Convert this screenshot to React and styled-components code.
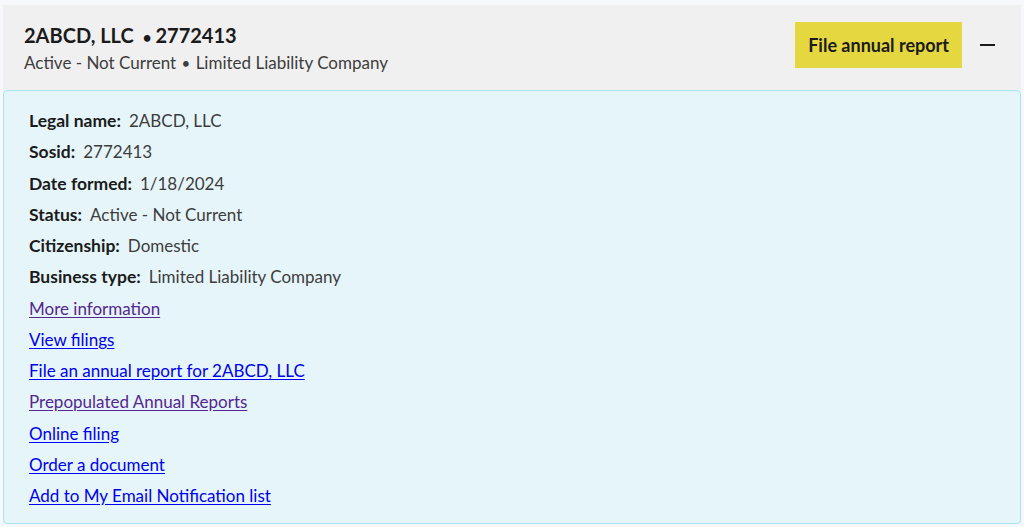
import React from 'react';
import styled, { createGlobalStyle } from 'styled-components';

const GlobalStyle = createGlobalStyle`
  html, body {
    margin: 0;
    padding: 0;
    background: #f7f8fc;
  }
  body {
    font-family: Lato, "Noto Sans", sans-serif;
    color: #1b1b1b;
  }
`;

const Page = styled.div`
  padding: 5px 3px 0 3px;
`;

const Header = styled.div`
  display: flex;
  align-items: flex-start;
  justify-content: space-between;
  background: #f0f0f0;
  padding: 17px 26px 17px 21px;
  height: 51px;
`;

const TitleBlock = styled.div`
  display: flex;
  flex-direction: column;
`;

const Title = styled.div`
  font-size: 20px;
  font-weight: 700;
  line-height: 26px;
  color: #1b1b1b;
`;

const Sub = styled.div`
  font-size: 17px;
  line-height: 25px;
  color: #3d3d3d;
  margin-top: 2px;
`;

const Dot = styled.span`
  font-size: 15px;
  line-height: 0;
  margin: ${p => (p.$tight ? '0 4px 0 9px' : '0 1px')};
`;

const Actions = styled.div`
  display: flex;
  align-items: center;
  gap: 18px;
`;

const ReportButton = styled.button`
  background: #e5d73f;
  border: none;
  height: 46px;
  padding: 0 13px;
  font-family: inherit;
  font-size: 18px;
  font-weight: 700;
  color: #1b1b1b;
  cursor: pointer;
`;

const Minus = styled.span`
  display: block;
  width: 15px;
  height: 2px;
  background: #1b1b1b;
`;

const Details = styled.div`
  background: #e6f5f9;
  border: 1px solid #a8e3ef;
  border-radius: 4px;
  padding: 14px 25px 16px 25px;
  height: 402px;
  display: flex;
  flex-direction: column;
`;

const Row = styled.div`
  font-size: 17px;
  line-height: 31.25px;
  color: #3d3d3d;
`;

const Label = styled.b`
  color: #1b1b1b;
  font-weight: 700;
  font-size: 17.5px;
  margin-right: 8px;
`;

const Link = styled.a`
  font-size: 17px;
  line-height: 31.25px;
  color: ${p => (p.$visited ? '#54278f' : '#0000ee')};
  text-decoration: underline;
  text-underline-offset: 2px;
  align-self: flex-start;
`;

const facts = [
  ['Legal name:', '2ABCD, LLC'],
  ['Sosid:', '2772413'],
  ['Date formed:', '1/18/2024'],
  ['Status:', 'Active - Not Current'],
  ['Citizenship:', 'Domestic'],
  ['Business type:', 'Limited Liability Company'],
];

const links = [
  ['More information', true],
  ['View filings', false],
  ['File an annual report for 2ABCD, LLC', false],
  ['Prepopulated Annual Reports', true],
  ['Online filing', false],
  ['Order a document', false],
  ['Add to My Email Notification list', false],
];

export default function App() {
  return (
    <Page>
      <GlobalStyle />
      <Header>
        <TitleBlock>
          <Title>
            2ABCD, LLC<Dot $tight>•</Dot>2772413
          </Title>
          <Sub>
            Active - Not Current <Dot>•</Dot> Limited Liability Company
          </Sub>
        </TitleBlock>
        <Actions>
          <ReportButton>File annual report</ReportButton>
          <Minus />
        </Actions>
      </Header>
      <Details>
        {facts.map(([k, v]) => (
          <Row key={k}>
            <Label>{k}</Label>
            {v}
          </Row>
        ))}
        {links.map(([t, visited]) => (
          <Link key={t} href="#" $visited={visited}>
            {t}
          </Link>
        ))}
      </Details>
    </Page>
  );
}
